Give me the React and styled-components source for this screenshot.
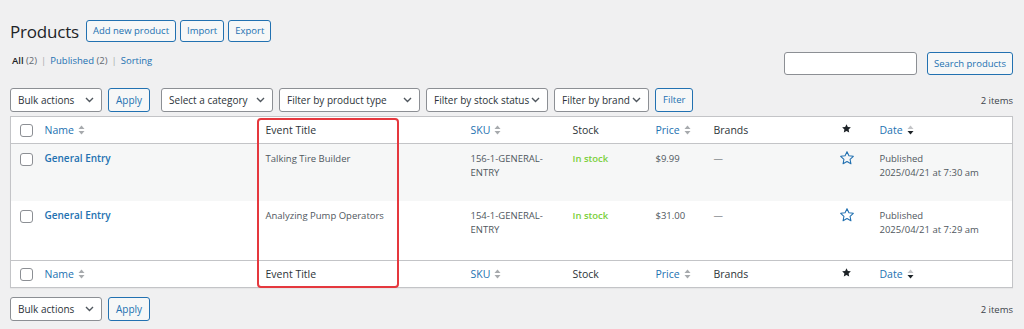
import React from "react";
import styled, { createGlobalStyle } from "styled-components";

const GlobalStyle = createGlobalStyle`
  html, body {
    margin: 0;
    padding: 0;
    background: #f0f0f1;
    font-family: "Open Sans", "Noto Sans", sans-serif;
    color: #3c434a;
  }
  * { box-sizing: border-box; }
`;

const Page = styled.div`
  width: 1024px;
  height: 329px;
  overflow: hidden;
  padding: 18px 11px 0 10px;
`;

const TitleRow = styled.div`
  display: flex;
  align-items: center;
  gap: 4px;
  height: 26px;
`;

const Title = styled.h1`
  margin: 0 3px 0 0;
  font-size: 17px;
  font-weight: 400;
  color: #1d2327;
  letter-spacing: -0.2px;
`;

const Button = styled.button`
  height: ${(p) => p.$h || 22}px;
  padding: 0 ${(p) => p.$px || 6}px;
  border: 1px solid #2271b1;
  border-radius: 3px;
  background: #f6f7f7;
  color: #2271b1;
  font-family: inherit;
  font-size: ${(p) => p.$fs || 9.5}px;
  line-height: 1;
  cursor: pointer;
  white-space: nowrap;
`;

const SubRow = styled.div`
  display: flex;
  justify-content: space-between;
  align-items: flex-start;
  margin-top: 8px;
  height: 36px;
`;

const SubNav = styled.ul`
  display: flex;
  list-style: none;
  margin: 2px 0 0 2px;
  padding: 0;
  font-size: 9.5px;
  color: #646970;
`;

const SubItem = styled.li`
  a {
    color: ${(p) => (p.$current ? "#1d2327" : "#2271b1")};
    font-weight: ${(p) => (p.$current ? 600 : 400)};
    text-decoration: none;
  }
  .count { color: #646970; font-weight: 400; }
  .sep { color: #a7aaad; margin: 0 4px; }
`;

const SearchBox = styled.div`
  display: flex;
  gap: 10px;
  align-items: center;
`;

const SearchInput = styled.input`
  width: 133px;
  height: 23px;
  border: 1px solid #8c8f94;
  border-radius: 3px;
  background: #fff;
`;

const TableNav = styled.div`
  display: flex;
  align-items: center;
  height: 24px;
  margin: ${(p) => p.$m || "0"};
`;

const Actions = styled.div`
  display: flex;
  align-items: center;
  gap: ${(p) => p.$gap || 6}px;
  margin-left: ${(p) => p.$ml || 0}px;
`;

const SelectBox = styled.div`
  width: ${(p) => p.$w}px;
  height: 24px;
  border: 1px solid #8c8f94;
  border-radius: 3px;
  background: #fff;
  display: flex;
  align-items: center;
  justify-content: space-between;
  padding: 0 7px 0 7px;
  font-size: 10px;
  color: #2c3338;
  white-space: nowrap;
`;

const Count = styled.div`
  margin-left: auto;
  font-size: 9.5px;
  color: #3c434a;
`;

const TableWrap = styled.div`
  position: relative;
  margin-top: 4px;
`;

const Table = styled.table`
  width: 1003px;
  border-collapse: collapse;
  table-layout: fixed;
  background: #fff;
  border: 1px solid #c3c4c7;
  box-shadow: 0 1px 1px rgba(0, 0, 0, 0.04);
`;

const Th = styled.th`
  height: 27px;
  padding: ${(p) => (p.$center ? "0 6px 0 0" : "0 8px")};
  text-align: ${(p) => (p.$center ? "center" : "left")};
  font-weight: 400;
  font-size: 10.5px;
  color: #2c3338;
  border-bottom: ${(p) => (p.$foot ? "none" : "1px solid #c3c4c7")};
  border-top: ${(p) => (p.$foot ? "1px solid #c3c4c7" : "none")};
  white-space: nowrap;
`;

const SortLink = styled.span`
  color: #2271b1;
  display: inline-flex;
  align-items: center;
  gap: 4px;
`;

const Tr = styled.tr`
  background: ${(p) => (p.$alt ? "#f6f7f7" : "#fff")};
`;

const Td = styled.td`
  height: ${(p) => p.$h}px;
  vertical-align: top;
  padding: ${(p) => (p.$pt != null ? p.$pt : 8)}px ${(p) => (p.$center ? "6px 0 0" : "8px 0")};
  font-size: 9.5px;
  line-height: 14px;
  color: #50575e;
  text-align: ${(p) => (p.$center ? "center" : "left")};
`;

const CheckCell = styled.td`
  vertical-align: top;
  padding: 9px 0 0 9px;
`;

const CheckHead = styled.th`
  padding: 0 0 0 9px;
  text-align: left;
  border-bottom: ${(p) => (p.$foot ? "none" : "1px solid #c3c4c7")};
  border-top: ${(p) => (p.$foot ? "1px solid #c3c4c7" : "none")};
`;

const Checkbox = styled.span`
  display: block;
  width: 13px;
  height: 13px;
  border: 1px solid #8c8f94;
  border-radius: 3px;
  background: #fff;
`;

const ProductName = styled.a`
  color: #2271b1;
  font-weight: 600;
  font-size: 10px;
  text-decoration: none;
`;

const InStock = styled.span`
  color: #7ad03a;
  font-weight: 600;
`;

const Highlight = styled.div`
  position: absolute;
  left: 247px;
  top: 2px;
  width: 142px;
  height: 170px;
  border: 2px solid #e5383e;
  border-radius: 4px;
  pointer-events: none;
`;

const Chevron = () => (
  <svg width="9" height="6" viewBox="0 0 9 6">
    <path d="M1 1l3.5 3.5L8 1" fill="none" stroke="#50575e" strokeWidth="1.4" />
  </svg>
);

const SortIcon = ({ active }) => (
  <svg width="7" height="10" viewBox="0 0 7 10">
    <path d="M3.5 0.5L6.5 4H0.5z" fill={active ? "#c3c4c7" : "#a7aaad"} />
    <path d="M3.5 9.5L6.5 6H0.5z" fill={active ? "#1d2327" : "#a7aaad"} />
  </svg>
);

const starPath =
  "M12 2.5l2.9 6.1 6.6.8-4.9 4.6 1.3 6.6L12 17.3l-5.9 3.3 1.3-6.6-4.9-4.6 6.6-.8z";

const Star = ({ filled }) =>
  filled ? (
    <svg width="11" height="11" viewBox="0 0 24 24">
      <path d={starPath} fill="#1d2327" />
    </svg>
  ) : (
    <svg width="16" height="16" viewBox="0 0 24 24">
      <path d={starPath} fill="none" stroke="#2271b1" strokeWidth="1.6" strokeLinejoin="round" />
    </svg>
  );

const products = [
  {
    name: "General Entry",
    event: "Talking Tire Builder",
    sku: ["156-1-GENERAL-", "ENTRY"],
    price: "$9.99",
    date: "2025/04/21 at 7:30 am",
  },
  {
    name: "General Entry",
    event: "Analyzing Pump Operators",
    sku: ["154-1-GENERAL-", "ENTRY"],
    price: "$31.00",
    date: "2025/04/21 at 7:29 am",
  },
];

const HeadRow = ({ foot }) => (
  <tr>
    <CheckHead $foot={foot}>
      <Checkbox />
    </CheckHead>
    <Th $foot={foot}>
      <SortLink>
        Name <SortIcon />
      </SortLink>
    </Th>
    <Th $foot={foot}>Event Title</Th>
    <Th $foot={foot}>
      <SortLink>
        SKU <SortIcon />
      </SortLink>
    </Th>
    <Th $foot={foot}>Stock</Th>
    <Th $foot={foot}>
      <SortLink>
        Price <SortIcon />
      </SortLink>
    </Th>
    <Th $foot={foot}>Brands</Th>
    <Th $foot={foot} $center>
      <Star filled />
    </Th>
    <Th $foot={foot}>
      <SortLink>
        Date <SortIcon active />
      </SortLink>
    </Th>
  </tr>
);

const BulkActions = () => (
  <Actions>
    <SelectBox $w={92}>
      Bulk actions <Chevron />
    </SelectBox>
    <Button $h={24} $px={7} $fs={10}>
      Apply
    </Button>
  </Actions>
);

export default function App() {
  return (
    <>
      <GlobalStyle />
      <Page>
        <TitleRow>
          <Title>Products</Title>
          <Button>Add new product</Button>
          <Button>Import</Button>
          <Button>Export</Button>
        </TitleRow>

        <SubRow>
          <SubNav>
            <SubItem $current>
              <a href="#">All</a> <span className="count">(2)</span>
              <span className="sep">|</span>
            </SubItem>
            <SubItem>
              <a href="#">Published</a> <span className="count">(2)</span>
              <span className="sep">|</span>
            </SubItem>
            <SubItem>
              <a href="#">Sorting</a>
            </SubItem>
          </SubNav>
          <SearchBox>
            <SearchInput />
            <Button $h={23} $px={6}>
              Search products
            </Button>
          </SearchBox>
        </SubRow>

        <TableNav>
          <BulkActions />
          <Actions $ml={11} $gap={6}>
            <SelectBox $w={112}>
              Select a category <Chevron />
            </SelectBox>
            <SelectBox $w={141}>
              Filter by product type <Chevron />
            </SelectBox>
            <SelectBox $w={122}>
              Filter by stock status <Chevron />
            </SelectBox>
            <SelectBox $w={95}>
              Filter by brand <Chevron />
            </SelectBox>
            <Button $h={24} $px={7} $fs={9.5}>
              Filter
            </Button>
          </Actions>
          <Count>2 items</Count>
        </TableNav>

        <TableWrap>
          <Table>
            <colgroup>
              <col style={{ width: 26 }} />
              <col style={{ width: 221 }} />
              <col style={{ width: 205 }} />
              <col style={{ width: 102 }} />
              <col style={{ width: 83 }} />
              <col style={{ width: 58 }} />
              <col style={{ width: 122 }} />
              <col style={{ width: 44 }} />
              <col />
            </colgroup>
            <thead>
              <HeadRow />
            </thead>
            <tbody>
              {products.map((p, i) => (
                <Tr key={i} $alt={i === 0}>
                  <CheckCell>
                    <Checkbox />
                  </CheckCell>
                  <Td $h={i === 0 ? 57 : 60} $pt={7}>
                    <ProductName href="#">{p.name}</ProductName>
                  </Td>
                  <Td>{p.event}</Td>
                  <Td>
                    {p.sku[0]}
                    <br />
                    {p.sku[1]}
                  </Td>
                  <Td>
                    <InStock>In stock</InStock>
                  </Td>
                  <Td>{p.price}</Td>
                  <Td>—</Td>
                  <Td $center $pt={6}>
                    <Star />
                  </Td>
                  <Td>
                    Published
                    <br />
                    {p.date}
                  </Td>
                </Tr>
              ))}
            </tbody>
            <tfoot>
              <HeadRow foot />
            </tfoot>
          </Table>
          <Highlight />
        </TableWrap>

        <TableNav $m="9px 0 0 0">
          <BulkActions />
          <Count>2 items</Count>
        </TableNav>
      </Page>
    </>
  );
}
